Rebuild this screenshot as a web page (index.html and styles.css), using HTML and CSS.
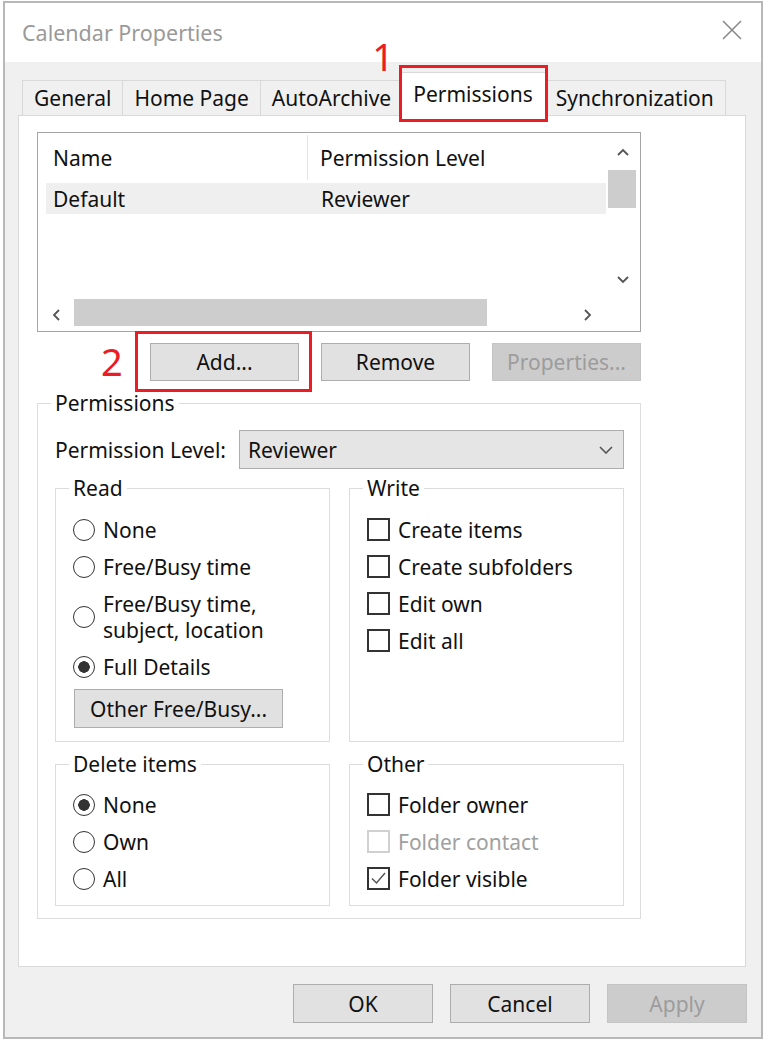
FILE: index.html
```html
<!DOCTYPE html>
<html>
<head>
<meta charset="utf-8">
<link rel="stylesheet" href="styles.css">
</head>
<body>
<div class="window">
  <div class="titlebar">
    <span class="title">Calendar Properties</span>
    <svg class="close" viewBox="0 0 20 20" width="20" height="20"><path d="M1 1L19 19M19 1L1 19" stroke="#8a8a8a" stroke-width="1.6" fill="none"/></svg>
  </div>
  <div class="body">
    <div class="tabs">
      <div class="tab">General</div>
      <div class="tab">Home Page</div>
      <div class="tab">AutoArchive</div>
      <div class="tab active">Permissions<span class="mark mark-tab"></span><span class="num num-1">1</span></div>
      <div class="tab">Synchronization</div>
    </div>
    <div class="panel">
      <div class="listbox">
        <div class="list-main">
          <div class="lhead">
            <div class="c1">Name</div>
            <div class="c2">Permission Level</div>
          </div>
          <div class="lrow">
            <div class="c1">Default</div>
            <div class="c2">Reviewer</div>
          </div>
        </div>
        <div class="vscroll">
          <div class="sarrow"><svg width="12" height="8" viewBox="0 0 12 8"><path d="M1 7L6 2L11 7" stroke="#555" stroke-width="1.8" fill="none"/></svg></div>
          <div class="vthumb"></div>
          <div class="sfill"></div>
          <div class="sarrow"><svg width="12" height="8" viewBox="0 0 12 8"><path d="M1 1L6 6L11 1" stroke="#555" stroke-width="1.8" fill="none"/></svg></div>
        </div>
        <div class="hscroll">
          <div class="harrow"><svg width="8" height="12" viewBox="0 0 8 12"><path d="M7 1L2 6L7 11" stroke="#555" stroke-width="1.8" fill="none"/></svg></div>
          <div class="hthumb"></div>
          <div class="sfill"></div>
          <div class="harrow"><svg width="8" height="12" viewBox="0 0 8 12"><path d="M1 1L6 6L1 11" stroke="#555" stroke-width="1.8" fill="none"/></svg></div>
        </div>
        <div class="corner"></div>
      </div>

      <div class="btnrow">
        <button class="btn btn-list">Add...<span class="mark mark-add"></span><span class="num num-2">2</span></button>
        <button class="btn btn-list">Remove</button>
        <button class="btn btn-list disabled">Properties...</button>
      </div>

      <fieldset class="group main-group">
        <legend>Permissions</legend>
        <div class="level-row">
          <span class="level-label">Permission Level:</span>
          <div class="combo">
            <span>Reviewer</span>
            <svg width="14" height="8" viewBox="0 0 14 8"><path d="M1 1L7 7L13 1" stroke="#555" stroke-width="1.6" fill="none"/></svg>
          </div>
        </div>
        <div class="groups">
          <fieldset class="group sub">
            <legend>Read</legend>
            <div class="opts">
              <div class="opt"><span class="radio"></span><span>None</span></div>
              <div class="opt"><span class="radio"></span><span>Free/Busy time</span></div>
              <div class="opt two"><span class="radio"></span><span>Free/Busy time,<br>subject, location</span></div>
              <div class="opt"><span class="radio checked"></span><span>Full Details</span></div>
            </div>
            <button class="btn btn-other">Other Free/Busy...</button>
          </fieldset>
          <fieldset class="group sub">
            <legend>Write</legend>
            <div class="opts">
              <div class="opt"><span class="check"></span><span>Create items</span></div>
              <div class="opt"><span class="check"></span><span>Create subfolders</span></div>
              <div class="opt"><span class="check"></span><span>Edit own</span></div>
              <div class="opt"><span class="check"></span><span>Edit all</span></div>
            </div>
          </fieldset>
          <fieldset class="group sub small">
            <legend>Delete items</legend>
            <div class="opts">
              <div class="opt"><span class="radio checked"></span><span>None</span></div>
              <div class="opt"><span class="radio"></span><span>Own</span></div>
              <div class="opt"><span class="radio"></span><span>All</span></div>
            </div>
          </fieldset>
          <fieldset class="group sub small">
            <legend>Other</legend>
            <div class="opts">
              <div class="opt"><span class="check"></span><span>Folder owner</span></div>
              <div class="opt off"><span class="check"></span><span>Folder contact</span></div>
              <div class="opt"><span class="check"><svg width="19" height="19" viewBox="0 0 19 19"><path d="M3 9.5L7.5 14L16 4" stroke="#555" stroke-width="1.5" fill="none"/></svg></span><span>Folder visible</span></div>
            </div>
          </fieldset>
        </div>
      </fieldset>
    </div>
    <div class="footer">
      <button class="btn btn-foot">OK</button>
      <button class="btn btn-foot">Cancel</button>
      <button class="btn btn-foot disabled">Apply</button>
    </div>
  </div>
</div>
</body>
</html>
```
FILE: styles.css
```css
* { box-sizing: border-box; }
html, body { margin: 0; background: #fff; }
body {
  font-family: "Noto Sans", "Open Sans", sans-serif;
  font-size: 21px;
  line-height: 24px;
  color: #111;
}
.window {
  margin: 1px 0 0 3px;
  width: 760px;
  height: 1038px;
  border: 2px solid #b8b8b8;
  display: flex;
  flex-direction: column;
  background: #f0f0f0;
}
.titlebar {
  height: 59px;
  flex: none;
  background: #fff;
  display: flex;
  align-items: center;
  justify-content: space-between;
  padding: 0 19px 0 17px;
}
.title { font-size: 21.5px; color: #9a9a9a; }
.close { align-self: flex-start; margin-top: 17px; }
.body {
  flex: 1;
  display: flex;
  flex-direction: column;
  padding: 0 15px 0 13px;
}
.tabs {
  height: 53px;
  display: flex;
  align-items: flex-end;
  padding-left: 4px;
}
.tab {
  height: 35px;
  padding: 0 11px;
  border: 1px solid #d9d9d9;
  border-bottom: none;
  margin-right: -1px;
  background: #f0f0f0;
  display: flex;
  align-items: center;
  white-space: nowrap;
}
.tab.active {
  position: relative;
  z-index: 1;
  height: 44px;
  margin: 0 -2px -1px -2px;
  padding: 0 12px 2px;
  background: #fff;
}
.mark {
  position: absolute;
  border: 3px solid #ec1c24;
  pointer-events: none;
}
.mark-tab { left: -2px; right: -3px; top: -8px; bottom: -6px; }
.num {
  position: absolute;
  color: #ec1c24;
  font-size: 38px;
  line-height: 40px;
}
.num-1 { left: -29px; top: -37px; }
.num-2 { left: -50px; top: -3px; }
.panel {
  height: 852px;
  flex: none;
  background: #fff;
  border: 1px solid #d9d9d9;
  padding: 16px 0 0 18px;
}
.listbox {
  width: 604px;
  height: 200px;
  border: 1px solid #a5a5a5;
  display: grid;
  grid-template-columns: 1fr 34px;
  grid-template-rows: 1fr 33px;
}
.lhead {
  height: 47px;
  padding-top: 2px;
  display: flex;
}
.lhead .c1 {
  width: 270px;
  padding-left: 15px;
  border-right: 1px solid #e5e5e5;
  display: flex;
  align-items: center;
}
.lhead .c2 {
  padding-left: 12px;
  display: flex;
  align-items: center;
}
.lrow {
  margin: 3px 0 0 8px;
  height: 31px;
  background: #efefef;
  display: flex;
  align-items: center;
}
.lrow .c1 { width: 262px; padding-left: 7px; }
.lrow .c2 { padding-left: 13px; }
.vscroll { display: flex; flex-direction: column; }
.sarrow { height: 37px; display: flex; align-items: center; justify-content: center; flex: none; }
.vthumb { height: 38px; margin: 0 4px 0 2px; background: #cdcdcd; flex: none; }
.sfill { flex: 1; }
.hscroll { display: flex; }
.harrow { width: 36px; display: flex; align-items: center; justify-content: center; flex: none; }
.hthumb { width: 413px; margin: 1px 0 5px; background: #cdcdcd; flex: none; }
.btnrow {
  width: 604px;
  margin-top: 11px;
  display: flex;
  justify-content: flex-end;
  gap: 22px;
}
.btn {
  font: inherit;
  color: #111;
  background: #e1e1e1;
  border: 1px solid #adadad;
  padding: 0;
  display: flex;
  align-items: center;
  justify-content: center;
}
.btn.disabled { background: #cccccc; border-color: #c4c4c4; color: #9c9c9c; }
.btn-list { width: 149px; height: 38px; position: relative; }
.mark-add { left: -16px; right: -14px; top: -13px; bottom: -12px; }
.group {
  margin: 0;
  border: 1px solid #dcdcdc;
  min-width: 0;
}
.group legend {
  padding: 0 4px;
  margin-left: -4px;
  line-height: 24px;
}
.main-group {
  width: 604px;
  margin-top: 10px;
  padding: 0 16px 12px 17px;
}
.level-row {
  margin-top: 15px;
  display: flex;
  align-items: center;
  height: 39px;
}
.level-label { width: 184px; flex: none; }
.combo {
  width: 385px;
  height: 39px;
  background: #e5e5e5;
  border: 1px solid #adadad;
  display: flex;
  align-items: center;
  justify-content: space-between;
  padding: 0 10px 0 8px;
}
.groups {
  margin-top: 7px;
  display: grid;
  grid-template-columns: 275px 275px;
  column-gap: 19px;
  row-gap: 10px;
}
.sub { padding: 0 16px 13px 17px; }
.sub.small { padding-bottom: 8px; }
.opts { padding-top: 11px; }
.sub.small .opts { padding-top: 10px; }
.opt {
  min-height: 37px;
  display: flex;
  align-items: center;
  gap: 8px;
  white-space: nowrap;
}
.opt.two { min-height: 63px; line-height: 26px; }
.radio {
  width: 22px;
  height: 22px;
  flex: none;
  border-radius: 50%;
  border: 1.8px solid #333;
  background: #fff;
}
.radio.checked { background: radial-gradient(circle, #333 0 5.5px, #fff 6px); }
.check {
  width: 23px;
  height: 23px;
  flex: none;
  border: 2px solid #333;
  background: #fff;
  display: flex;
  align-items: center;
  justify-content: center;
}
.opt.off { color: #a0a0a0; }
.opt.off .check { border-color: #d0d0d0; }
.btn-other { width: 209px; height: 39px; margin: 4px 0 0 1px; }
.footer {
  margin: 17px -1px 0 0;
  display: flex;
  justify-content: flex-end;
  gap: 17px;
}
.btn-foot { width: 140px; height: 39px; }
```
